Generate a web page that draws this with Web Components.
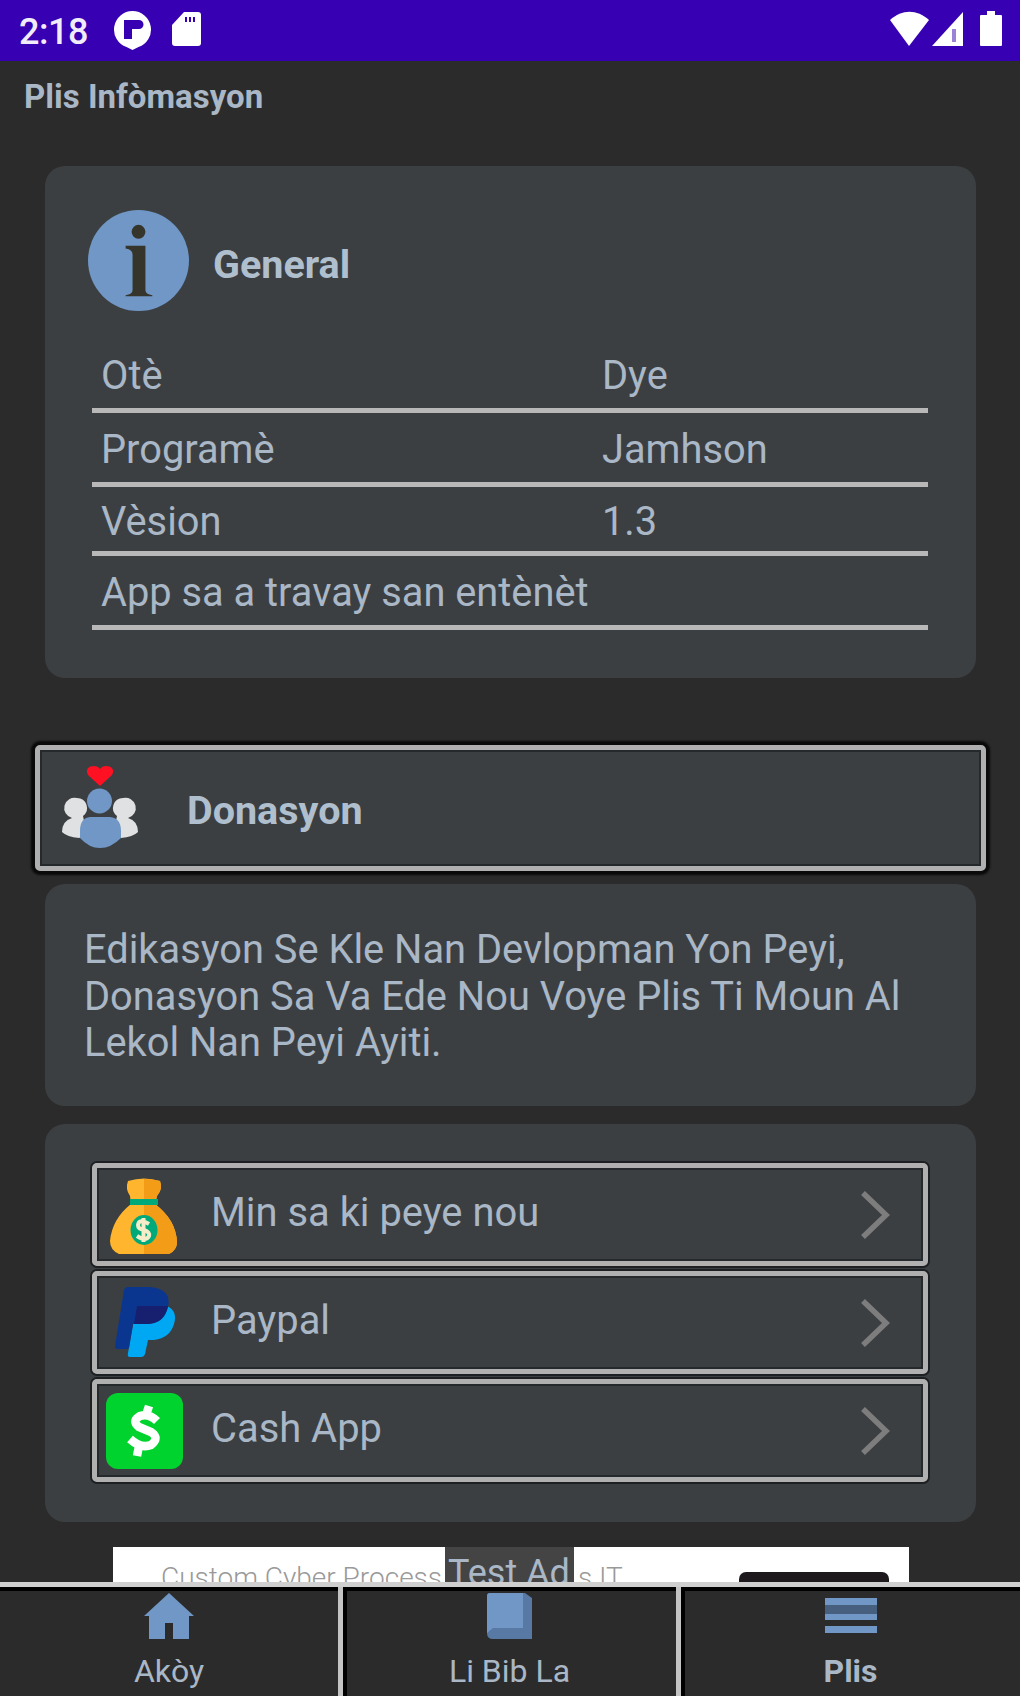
<!DOCTYPE html>
<html lang="ht">
<head>
<meta charset="utf-8">
<title>Plis Infòmasyon</title>
<style>
  body {
    margin: 0;
    width: 1020px;
    height: 1696px;
    overflow: hidden;
    background: #2b2b2b;
    color: #a9b7c6;
    font-family: Roboto, "Liberation Sans", sans-serif;
  }
</style>
</head>
<body>
<info-screen></info-screen>
<script>
  /**
   * Base class: clones the markup of the subclass into an open shadow root.
   */
  class BaseElement extends HTMLElement {
    constructor() {
      super();
      const template = document.createElement('template');
      template.innerHTML = this.constructor.markup;
      this.attachShadow({mode: 'open'}).appendChild(template.content.cloneNode(true));
    }
  }

  class StatusBar extends BaseElement {
    static markup = `
      <style>
        :host { display: flex; align-items: center; height: 61px; box-sizing: border-box; padding: 0 16px 0 19px; background: #3700b3; color: #f1ecfb; }
        .time { font-size: 36px; font-weight: 500; line-height: 61px; padding-top: 3px; width: 94px; letter-spacing: -.5px; }
        .space { flex: 1; }
        svg { display: block; fill: #fff; }
      </style>
      <span class="time">2:18</span>
      <svg width="39" height="61" viewBox="113 0 39 61"><path fill-rule="evenodd" d="M132.500 11a18.500 18.500 0 0 1 6 36l-6 3-6-3a18.500 18.500 0 0 1 6-36ZM124 20V39h8V29h7a4.500 4.500 0 0 0 0-9Z"/></svg>
      <svg width="49" height="61" viewBox="152 0 49 61"><path fill-rule="evenodd" d="M184 12h14a3 3 0 0 1 3 3v28a3 3 0 0 1-3 3h-23a3 3 0 0 1-3-3V25ZM185 17v5h2v-5Zm4 0v5h2v-5Zm4 0v5h2v-5Z"/></svg>
      <span class="space"></span>
      <svg width="116" height="61" viewBox="888 0 116 61">
        <path d="M890 20c12-11 27-11 39 0l-20 26Z"/>
        <path d="M963 12v34h-31Z"/>
        <path d="M952 29h4v13h-4Z" fill="#9a83d6"/>
        <path d="M981 15h6v-4h8v4h6q1 0 1 1v29q0 1-1 1h-20q-1 0-1-1v-29q0-1 1-1Z"/>
      </svg>`;
  }

  class InfoCard extends BaseElement {
    static markup = `
      <style>
        :host { display: block; box-sizing: border-box; margin: 0 44px 0 45px; border-radius: 20px; background: #3c3f41; }
      </style>
      <slot></slot>`;
  }

  class CardHeader extends BaseElement {
    static markup = `
      <style>
        :host { display: flex; align-items: center; gap: 23px; height: 103px; padding-left: 42px; }
        .title { font-size: 39.500px; font-weight: 700; line-height: 44px; padding-top: 9px; color: #b0bfce; }
      </style>
      <svg width="103" height="103" viewBox="0 0 104 104">
        <circle cx="52" cy="52" r="51" fill="#7097c5"/>
        <g fill="#36352c">
          <circle cx="52" cy="23" r="7"/>
          <path d="M39 37H59V82q0 4 7 5v1H39v-1q7-1 7-5V46q0-5-7-6Z"/>
        </g>
      </svg>
      <span class="title"><slot></slot></span>`;
  }

  class InfoRow extends BaseElement {
    static markup = `
      <style>
        :host { display: flex; box-sizing: border-box; height: 74px; margin: 0 48px 0 47px; padding: 5px 0 0 9px; align-items: center; border-bottom: 5px solid #b8b8b8; font-size: 39.800px; line-height: 48px; white-space: nowrap; }
        .label { flex: 0 0 501px; }
      </style>
      <span class="label"><slot></slot></span>
      <span><slot name="value"></slot></span>`;
  }

  class DonationBanner extends BaseElement {
    static markup = `
      <style>
        :host { display: flex; align-items: center; box-sizing: border-box; height: 126px; margin: 67px 34px 0 35px; border: 5px solid #b0b0b0; border-radius: 5px; background: #3c3f41; box-shadow: 0 0 2px 4px #0a0a0a, inset 0 0 0 2px #25292b; }
        svg { display: block; flex: none; }
        .text { padding: 6px 0 0 45px; font-size: 39.500px; font-weight: 700; line-height: 48px; color: #b0bfce; }
      </style>
      <svg width="102" height="116" viewBox="40 750 102 116">
        <path fill="#dfe1e3" d="M77 798a10 10 0 0 1 6 18l4 19-8 3q-12-1-17-6 0-11 10-14a10 10 0 0 1 5-20ZM123 798a10 10 0 0 0-6 18l-4 19 8 3q12-1 17-6 0-11-10-14a10 10 0 0 0-5-20Z"/>
        <circle cx="99.500" cy="801" r="12.500" fill="#7097c5"/>
        <path fill="#7097c5" d="M90 817h20q11 1 11 14v7q-10 10-21 10t-20-10v-7q0-13 10-14Z"/>
        <path fill="#ff1022" d="M100 786 88 775c-3-6 1-9 6-9q4 0 6 3 2-3 6-3c6 0 9 4 6 9Z"/>
      </svg>
      <span class="text"><slot></slot></span>`;
  }

  class LinkRow extends BaseElement {
    static markup = `
      <style>
        :host { display: flex; align-items: center; box-sizing: border-box; height: 103px; margin: 0 48px 0 47px; border: 5px solid #b0b0b0; border-radius: 5px; box-shadow: 0 0 0 2px #1c2023, inset 0 0 0 2px #25292b; }
        .icon { flex: 0 0 114px; height: 92px; }
        .text { flex: 1; font-size: 39.900px; line-height: 48px; padding-bottom: 4px; white-space: nowrap; }
        .arrow { flex: none; margin-right: 32px; }
      </style>
      <span class="icon"><slot name="icon"></slot></span>
      <span class="text"><slot></slot></span>
      <svg class="arrow" width="32" height="52" viewBox="0 0 32 52" fill="none" stroke="#7d7d7d" stroke-width="5.500"><path d="M4 4 27 26 4 48"/></svg>`;
  }

  class TestAd extends BaseElement {
    static markup = `
      <style>
        :host { display: flex; height: 35px; margin: 25px 111px 0 113px; overflow: hidden; white-space: nowrap; }
        .left, .right { background: #fff; color: #999; font-size: 28px; font-weight: 300; line-height: 34px; }
        .left { width: 332px; box-sizing: border-box; padding: 14px 0 0 48px; }
        .badge { width: 129px; background: #444; font-size: 36px; line-height: 38px; padding: 7px 0 0 3px; box-sizing: border-box; }
        .right { flex: 1; display: flex; justify-content: space-between; }
        .right span { padding: 14px 0 0 4px; }
        .button { width: 150px; height: 30px; margin: 25px 20px 0 0; border-radius: 7px; background: #1d191d; }
      </style>
      <div class="left">Custom Cyber Process</div>
      <div class="badge">Test Ad</div>
      <div class="right"><span>s IT</span><div class="button"></div></div>`;
  }

  class NavBar extends BaseElement {
    static markup = `
      <style>
        :host { display: flex; height: 109px; border-top: 5px solid #cfcfcf; background: #2b2b2b; }
      </style>
      <slot></slot>`;
  }

  class NavItem extends BaseElement {
    static markup = `
      <style>
        :host { display: flex; flex-direction: column; align-items: center; box-sizing: border-box; flex: 0 0 338px; padding-top: 1px; box-shadow: inset 0 4px #000; font-size: 32px; line-height: 36px; white-space: nowrap; }
        :host([divided]) { border-left: 5px solid #c4c4c4; box-shadow: inset 4px 4px #000; }
        :host([active]) { flex: 1; font-weight: 700; }
        .icon { height: 65px; }
      </style>
      <span class="icon"><slot name="icon"></slot></span>
      <span><slot></slot></span>`;
  }

  class InfoScreen extends BaseElement {
    static markup = `
      <style>
        :host { display: flex; flex-direction: column; height: 1696px; }
        h1 { margin: 0; height: 105px; box-sizing: border-box; padding: 16px 0 0 24px; font-size: 33px; line-height: 40px; }
        svg { display: block; }
        main { flex: 1; min-height: 0; overflow: hidden; }
        .general { height: 512px; padding-top: 43px; }
        .general card-header { margin-bottom: 27px; }
        .about { height: 222px; margin-top: 13px; padding: 43px 0 0 39px; font-size: 39.800px; line-height: 46.500px; white-space: nowrap; }
        .links { display: flex; flex-direction: column; gap: 5px; height: 398px; margin-top: 18px; padding-top: 39px; }
      </style>
      <status-bar></status-bar>
      <main>
        <h1>Plis Infòmasyon</h1>
        <info-card class="general">
          <card-header>General</card-header>
          <info-row>Otè<span slot="value">Dye</span></info-row>
          <info-row>Programè<span slot="value">Jamhson</span></info-row>
          <info-row style="height: 69px">Vèsion<span slot="value">1.3</span></info-row>
          <info-row>App sa a travay san entènèt</info-row>
        </info-card>
        <donation-banner>Donasyon</donation-banner>
        <info-card class="about">Edikasyon Se Kle Nan Devlopman Yon Peyi,<br>Donasyon Sa Va Ede Nou Voye Plis Ti Moun Al<br>Lekol Nan Peyi Ayiti.</info-card>
        <info-card class="links">
          <link-row>
            <svg slot="icon" width="114" height="92" viewBox="97 1168 114 92">
              <path fill="#ffb52d" d="M128 1180q16-5 32 0 3 8-3 15l-2 8q21 16 22 38 0 8-8 12h-50q-9-4-9-13 2-22 21-37l-1-8q-5-7-2-15Z"/>
              <path fill="#f39c17" d="M144 1178q8 0 16 2 3 8-3 15l-2 8q21 16 22 38 0 8-8 12h-25Z"/>
              <path fill="#00a979" d="M130 1198h28v6h-28Z"/>
              <ellipse cx="144" cy="1229" rx="13.500" ry="15" fill="#00a979"/>
              <path fill="none" stroke="#f5ecc9" stroke-width="4" d="M149 1223q-10-6-11 1 0 4 6 5 6 2 5 6-3 6-12 0M143.500 1217v24"/>
            </svg>
            Min sa ki peye nou
          </link-row>
          <link-row>
            <svg slot="icon" width="114" height="92" viewBox="97 1277 114 92">
              <path fill="#00a8f3" d="M167 1306q11 5 7 18-4 14-20 16h-6l-3 14q-1 3-4 3h-11q-3 0-2-4l7-39Z"/>
              <path fill="#0b3690" d="M127 1287h23q22 2 18 20-5 18-25 17h-10l-4 24q-1 1-3 1h-9q-2 0-2-3l9-56q1-3 3-3Z"/>
              <path fill="#16206f" d="M137 1306h31q-3 18-22 18h-12Z"/>
            </svg>
            Paypal
          </link-row>
          <link-row>
            <svg slot="icon" width="114" height="92" viewBox="97 1385 114 92">
              <rect x="106" y="1393" width="77" height="76" rx="12" fill="#00d32d"/>
              <path fill="none" stroke="#fff" stroke-width="8.500" d="M157 1421q-8-8-17-5-9 5-1 11l12 5q9 6 0 13-10 4-21-6M149 1406l-3 9M139 1446l-2 10"/>
            </svg>
            Cash App
          </link-row>
        </info-card>
        <test-ad></test-ad>
      </main>
      <nav-bar>
        <nav-item>
          <svg slot="icon" width="52" height="52" viewBox="0 0 52 52"><path fill="#7097c5" d="M26 5 51 28H46V51H30V35H22V51H6V28H1Z"/></svg>
          Akòy
        </nav-item>
        <nav-item divided>
          <svg slot="icon" width="48" height="52" viewBox="0 0 48 52"><path fill="#5879a3" d="M4 5h35l7 5v41H7q-6 0-6-6V8q0-3 3-3Z"/><path fill="#7097c5" d="M4 5h33v35H7l-6 5V8q0-3 3-3Z"/></svg>
          Li Bib La
        </nav-item>
        <nav-item divided active>
          <svg slot="icon" width="52" height="52" viewBox="0 0 52 52"><path fill="#48607f" d="M0 12h52v18H0Z"/><path fill="#7097c5" d="M0 10h52v7H0Zm0 16h52v6H0Zm0 12h52v7H0Z"/></svg>
          Plis
        </nav-item>
      </nav-bar>`;
  }

  customElements.define('status-bar', StatusBar);
  customElements.define('info-card', InfoCard);
  customElements.define('card-header', CardHeader);
  customElements.define('info-row', InfoRow);
  customElements.define('donation-banner', DonationBanner);
  customElements.define('link-row', LinkRow);
  customElements.define('test-ad', TestAd);
  customElements.define('nav-bar', NavBar);
  customElements.define('nav-item', NavItem);
  customElements.define('info-screen', InfoScreen);
</script>
</body>
</html>
